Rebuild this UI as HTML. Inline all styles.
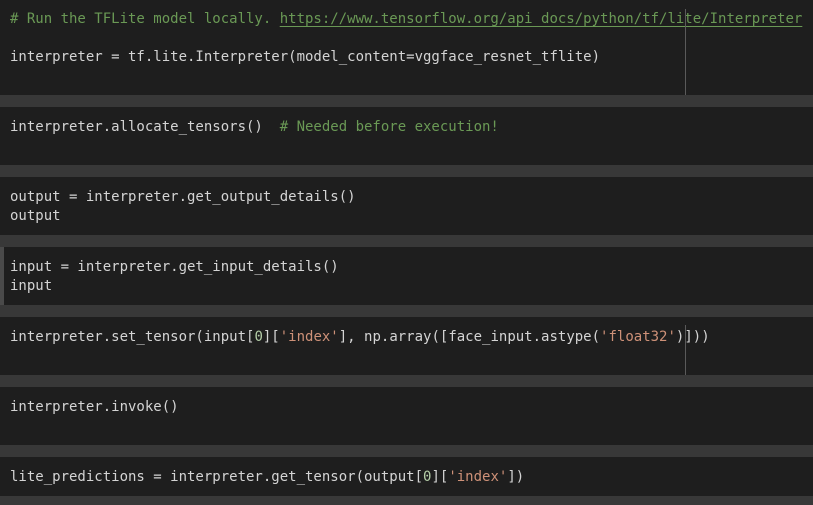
<!DOCTYPE html>
<html><head><style>
html,body{margin:0;padding:0;background:#383838;width:813px;height:505px;overflow:hidden}
.c{position:absolute;left:0;width:813px;background:#1e1e1e;font-family:"DejaVu Sans Mono","Liberation Mono",monospace;font-size:14px;line-height:19px;color:#d4d4d4;white-space:pre}
.t{position:absolute;left:10px}
.g{color:#6a9955}.s{color:#ce9178}.n{color:#b5cea8}
.u{text-decoration:underline;text-underline-offset:3px}
.r{position:absolute;left:685px;width:1px;background:#5a5a5a}
</style></head><body>
<div class="c" style="top:0;height:95px"><div class="t" style="top:10px"><span class="g"># Run the TFLite model locally. <span class="u">https://www.tensorflow.org/api_docs/python/tf/lite/Interpreter</span></span>

interpreter = tf.lite.Interpreter(model_content=vggface_resnet_tflite)</div><div class="r" style="top:9px;height:86px"></div></div>
<div class="c" style="top:107px;height:58px"><div class="t" style="top:11px">interpreter.allocate_tensors()  <span class="g"># Needed before execution!</span></div></div>
<div class="c" style="top:177px;height:58px"><div class="t" style="top:11px">output = interpreter.get_output_details()
output</div></div>
<div class="c" style="top:247px;height:58px"><div style="position:absolute;left:0;top:0;width:4px;height:58px;background:#4a4a4a"></div><div class="t" style="top:11px">input = interpreter.get_input_details()
input</div></div>
<div class="c" style="top:317px;height:58px"><div class="t" style="top:11px">interpreter.set_tensor(input[<span class="n">0</span>][<span class="s">'index'</span>], np.array([face_input.astype(<span class="s">'float32'</span>)]))</div><div class="r" style="top:8px;height:50px"></div></div>
<div class="c" style="top:387px;height:58px"><div class="t" style="top:11px">interpreter.invoke()</div></div>
<div class="c" style="top:457px;height:39px"><div class="t" style="top:11px">lite_predictions = interpreter.get_tensor(output[<span class="n">0</span>][<span class="s">'index'</span>])</div></div>
</body></html>
